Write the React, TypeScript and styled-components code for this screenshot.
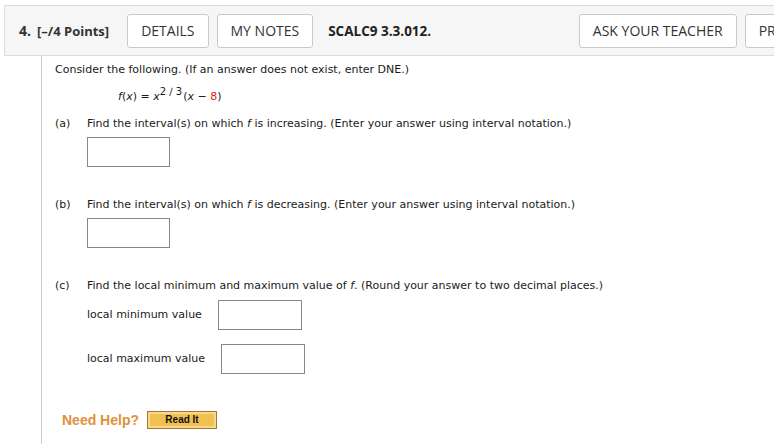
import styled, { createGlobalStyle } from 'styled-components';

const GlobalStyle = createGlobalStyle`
  html, body {
    margin: 0;
    padding: 0;
    background: #fff;
  }
  body {
    width: 774px;
    height: 444px;
    overflow: hidden;
  }
`;

function App() {
  return (
    <>
      <GlobalStyle />
      <Page>
        <Header>
          <QNumber>4.</QNumber>
          <Points>[–/4 Points]</Points>
          <HeadButton>DETAILS</HeadButton>
          <HeadButton>MY NOTES</HeadButton>
          <Code>SCALC9 3.3.012.</Code>
          <Spacer />
          <HeadButton>ASK YOUR TEACHER</HeadButton>
          <HeadButton>PRACTICE ANOTHER</HeadButton>
        </Header>
        <Body>
          <Text>Consider the following. (If an answer does not exist, enter DNE.)</Text>
          <Formula>
            <i>f</i>(<i>x</i>) = <i>x</i>
            <sup>2 ∕ 3</sup>(<i>x</i> − <Red>8</Red>)
          </Formula>

          <Part>
            <Label>(a)</Label>
            <Text>
              Find the interval(s) on which <i>f</i> is increasing. (Enter your answer using interval notation.)
            </Text>
          </Part>
          <AnswerBox />

          <Part $top={31}>
            <Label>(b)</Label>
            <Text>
              Find the interval(s) on which <i>f</i> is decreasing. (Enter your answer using interval notation.)
            </Text>
          </Part>
          <AnswerBox />

          <Part $top={31}>
            <Label>(c)</Label>
            <Text>
              Find the local minimum and maximum value of <i>f</i>. (Round your answer to two decimal places.)
            </Text>
          </Part>
          <ValueRow>
            <Text>local minimum value</Text>
            <ValueBox />
          </ValueRow>
          <ValueRow $top={14}>
            <Text>local maximum value</Text>
            <ValueBox />
          </ValueRow>

          <HelpRow>
            <HelpText>Need Help?</HelpText>
            <ReadIt>Read It</ReadIt>
          </HelpRow>
        </Body>
      </Page>
    </>
  );
}

export default App;

const Page = styled.div`
  width: 900px;
  padding: 5px 0 0 4px;
`;

const Header = styled.div`
  height: 49px;
  display: flex;
  align-items: center;
  gap: 8px;
  padding-left: 14px;
  background: #f6f6f6;
  border: 1px solid #dcdcdc;
  border-right: none;
  font-family: 'Open Sans', sans-serif;
  white-space: nowrap;
  overflow: hidden;
`;

const QNumber = styled.span`
  font-size: 14px;
  font-weight: 700;
  color: #333;
  margin-right: -2px;
`;

const Points = styled.span`
  font-size: 13px;
  font-weight: 700;
  color: #333;
  margin-right: 10px;
`;

const HeadButton = styled.button`
  height: 34px;
  padding: 0 13px;
  background: #fff;
  border: 1px solid #c9c9c9;
  border-radius: 3px;
  font-family: 'Open Sans', sans-serif;
  font-size: 14px;
  color: #333;
  flex-shrink: 0;
`;

const Code = styled.span`
  font-size: 13.5px;
  font-weight: 700;
  color: #222;
  margin-left: 7px;
`;

const Spacer = styled.div`
  flex: 1;
`;

const Body = styled.div`
  margin-left: 37px;
  border-left: 1px solid #cfcfcf;
  padding: 7px 0 0 13px;
  height: 400px;
  font-family: 'DejaVu Sans', Verdana, sans-serif;
  font-size: 11px;
  color: #1a1a1a;
`;

const Text = styled.span`
  font-size: 11px;
  line-height: 14px;
`;

const Formula = styled.div`
  margin: 6px 0 0 63px;
  font-size: 11px;
  line-height: 18px;

  sup {
    font-size: 10px;
    margin-right: 1px;
  }
`;

const Red = styled.span`
  color: #e02020;
`;

const Part = styled.div<{ $top?: number }>`
  display: flex;
  margin-top: ${(p) => p.$top ?? 11}px;
`;

const Label = styled.span`
  width: 32px;
  flex-shrink: 0;
`;

const AnswerBox = styled.div`
  width: 81px;
  height: 28px;
  margin: 6px 0 0 32px;
  border: 1px solid #888;
  background: #fff;
`;

const ValueRow = styled.div<{ $top?: number }>`
  display: flex;
  align-items: center;
  gap: 16px;
  margin: ${(p) => p.$top ?? 7}px 0 0 32px;
`;

const ValueBox = styled.div`
  width: 82px;
  height: 28px;
  border: 1px solid #888;
  background: #fff;
`;

const HelpRow = styled.div`
  display: flex;
  align-items: center;
  gap: 8px;
  margin: 37px 0 0 7px;
`;

const HelpText = styled.span`
  font-family: 'Liberation Sans', Arial, sans-serif;
  font-size: 14px;
  font-weight: 700;
  color: #e0913a;
`;

const ReadIt = styled.button`
  width: 70px;
  height: 18px;
  padding: 0;
  background: #f0c053;
  border: 1px solid #a8752e;
  box-shadow: inset 0 0 0 2px #f5d98d;
  font-family: 'Liberation Sans', Arial, sans-serif;
  font-size: 10px;
  font-weight: 700;
  color: #111;
`;
